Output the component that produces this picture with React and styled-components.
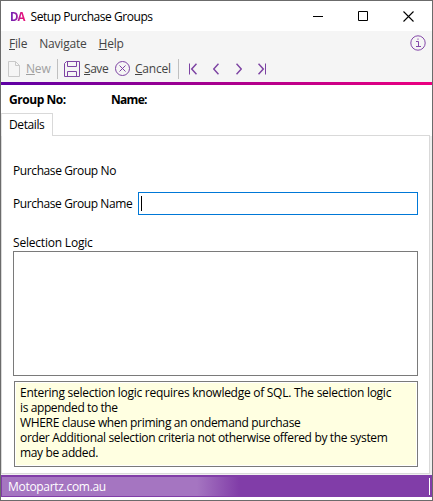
import React from 'react';
import styled, { createGlobalStyle } from 'styled-components';

const GlobalStyle = createGlobalStyle`
  * {
    box-sizing: border-box;
  }
  body {
    margin: 0;
    background: #fff;
    font-family: 'Open Sans', 'Noto Sans', sans-serif;
    font-size: 12px;
    line-height: 15px;
    color: #000;
  }
`;

const Window = styled.div`
  width: 433px;
  height: 501px;
  display: flex;
  flex-direction: column;
  border: 1px solid #6b6b6b;
  background: #fff;
  overflow: hidden;
`;

const Label = styled.span`
  white-space: pre;
  letter-spacing: ${(p) => p.$spacing || 0}px;
`;

const TitleBar = styled.header`
  height: 30px;
  flex: none;
  display: flex;
  align-items: center;
  padding: 0 18px 0 9px;
`;

const Logo = styled.span`
  width: 20.5px;
  font-size: 11.5px;
  font-weight: 700;
  letter-spacing: -0.9px;
  background: linear-gradient(90deg, #6a1bb0 0, #9a22a8 7px, #e5127d 12px);
  background-clip: text;
  color: transparent;
`;

const WindowButtons = styled.div`
  display: flex;
  gap: 34px;
  margin-left: auto;
`;

const MenuBar = styled.nav`
  height: 24px;
  flex: none;
  display: flex;
  align-items: center;
  gap: 12px;
  padding: 0 6px 0 8px;
  background: #f5f5f5;
  color: #444;
`;

const InfoIcon = styled.svg`
  margin-left: auto;
`;

const ToolBar = styled.div`
  height: 27px;
  flex: none;
  display: flex;
  align-items: center;
  padding-left: 7px;
  background: #f5f5f5;
  color: #444;
`;

const ToolButton = styled.div`
  width: ${(p) => p.$width}px;
  display: flex;
  align-items: center;
  gap: ${(p) => p.$gap}px;
  color: ${(p) => (p.$disabled ? '#a0a0a0' : '#444')};
`;

const Separator = styled.div`
  width: 1px;
  height: 20px;
  margin-right: ${(p) => p.$after}px;
  background: #c0c0c0;
`;

const Arrows = styled.div`
  width: 77px;
  display: flex;
  justify-content: space-between;
`;

const Stripe = styled.div`
  height: 3px;
  flex: none;
  background: linear-gradient(90deg, #5e00a4, #a8008f 50%, #ec0080);
`;

const Summary = styled.div`
  height: 28px;
  flex: none;
  display: grid;
  grid-template-columns: 102px auto;
  align-items: center;
  padding-left: 8px;
  font-weight: 700;
`;

const TabRow = styled.div`
  height: 23px;
  flex: none;
  display: flex;
`;

const Tab = styled.div`
  width: 52px;
  padding: 3px 0 0 7px;
  border: 1px solid #d9d9d9;
  border-bottom: 0;
  border-left-color: #e6e6e6;
`;

const TabRule = styled.div`
  flex: 1;
  border-bottom: 1px solid #d9d9d9;
  margin-right: 2px;
`;

const PanelFrame = styled.main`
  height: 339px;
  flex: none;
  padding: 0 2px 1px 0;
  background: #f0f0f0;
`;

const Panel = styled.section`
  height: 338px;
  display: flex;
  flex-direction: column;
  padding: 27px 11px 0 11px;
  border: 1px solid #d9d9d9;
  border-top: 0;
  background: #fff;
`;

const NameRow = styled.div`
  height: 23px;
  margin-top: 14px;
  display: flex;
  align-items: center;
  justify-content: space-between;
`;

const NameField = styled.div`
  width: 280px;
  height: 23px;
  padding: 3px 0 0 2px;
  border: 1px solid #0078d7;
`;

const Caret = styled.div`
  width: 1px;
  height: 15px;
  background: #000;
`;

const LogicLabel = styled.div`
  margin-top: 20px;
  height: 16px;
`;

const LogicField = styled.div`
  width: 405px;
  height: 125px;
  flex: none;
  border: 1px solid #7a7a7a;
`;

const Note = styled.div`
  width: 404px;
  height: 86px;
  margin: 5px 0 0 1px;
  flex: none;
  padding: 3px 0 0 5px;
  display: flex;
  flex-direction: column;
  border: 1px solid #7a7a7a;
  background: #ffffe1;
  box-shadow: inset 0 0 0 1px #fff;
`;

const StatusBar = styled.footer`
  height: 22px;
  flex: none;
  display: flex;
  align-items: center;
  justify-content: space-between;
  padding: 0 2px 0 6px;
  border: solid #813da8;
  border-width: 2px 0 1px 1px;
  background: linear-gradient(90deg, #a575c1 195px, #813da8 237px);
  color: #fff;
`;

const Grip = styled.div`
  width: 1px;
  height: 17px;
  background: #fff;
`;

const noteLines = [
  ['Entering selection logic requires knowledge of SQL. The selection logic', -0.27],
  ['is appended to the', -0.4],
  ['WHERE clause when priming an ondemand purchase', -0.33],
  ['order Additional selection criteria not otherwise offered by the system', -0.34],
  ['may be added.', -0.36],
];

const Arrow = ({ flip, bar }) => (
  <svg
    width={bar ? 8 : 6}
    height="12"
    viewBox={bar ? '0 0 8 12' : '0 0 6 12'}
    fill="none"
    stroke="#7d43a3"
  >
    <g transform={flip ? `matrix(-1 0 0 1 ${bar ? 8 : 6} 0)` : undefined}>
      <path d="M.5.7 5.3 6 .5 11.3" strokeWidth="1.5" />
      {bar && <path d="M7.5.5v11" />}
    </g>
  </svg>
);

const App = () => (
  <>
    <GlobalStyle />
    <Window>
      <TitleBar>
        <Logo>DA</Logo>
        <Label $spacing={-0.45}>Setup Purchase Groups</Label>
        <WindowButtons>
          <svg width="11" height="11" stroke="#000">
            <path d="M0 5.5h10" />
          </svg>
          <svg width="11" height="11" fill="none" stroke="#000">
            <path d="M.5.5h9v9h-9z" />
          </svg>
          <svg width="11" height="11" fill="none" stroke="#000" strokeWidth="1.1">
            <path d="m.5.5 10 10m0-10-10 10" />
          </svg>
        </WindowButtons>
      </TitleBar>
      <MenuBar>
        <Label $spacing={-0.2}><u>F</u>ile</Label>
        <Label $spacing={-0.2}>Navigate</Label>
        <Label $spacing={-0.2}><u>H</u>elp</Label>
        <InfoIcon width="16" height="16" fill="none" stroke="#8549a9">
          <circle cx="8" cy="8" r="7.2" />
          <path d="M6 6.5h2.5v5M6 11.5h5M8 3.5v1.3" />
        </InfoIcon>
      </MenuBar>
      <ToolBar>
        <ToolButton $width={49} $gap={6} $disabled>
          <svg width="12" height="16" fill="none" stroke="#c9c9c9">
            <path d="M.5.5h7l4 4v11H.5zM7.5.5v4h4" />
          </svg>
          <Label $spacing={-0.2}><u>N</u>ew</Label>
        </ToolButton>
        <Separator $after={6} />
        <ToolButton $width={51} $gap={4}>
          <svg width="16" height="16" fill="none" stroke="#7d43a3">
            <path d="M2.5.5h13v15H.5v-13zM3.5.5v5h9v-5M3.5 15.5v-5h9v5" />
          </svg>
          <Label $spacing={-0.45}><u>S</u>ave</Label>
        </ToolButton>
        <ToolButton $width={63} $gap={5}>
          <svg width="15" height="15" fill="none" stroke="#7d43a3">
            <circle cx="7.5" cy="7.5" r="7" />
            <path d="m4.5 4.5 6 6m0-6-6 6" />
          </svg>
          <Label $spacing={-0.2}><u>C</u>ancel</Label>
        </ToolButton>
        <Separator $after={10} />
        <Arrows>
          <Arrow flip bar />
          <Arrow flip />
          <Arrow />
          <Arrow bar />
        </Arrows>
      </ToolBar>
      <Stripe />
      <Summary>
        <Label $spacing={-0.45}>Group No:</Label>
        <Label $spacing={-0.7}>Name:</Label>
      </Summary>
      <TabRow>
        <Tab><Label $spacing={-0.4}>Details</Label></Tab>
        <TabRule />
      </TabRow>
      <PanelFrame>
        <Panel>
          <Label $spacing={-0.4}>Purchase Group No</Label>
          <NameRow>
            <Label $spacing={-0.41}>Purchase Group Name</Label>
            <NameField><Caret /></NameField>
          </NameRow>
          <LogicLabel><Label $spacing={-0.2}>Selection Logic</Label></LogicLabel>
          <LogicField />
          <Note>
            {noteLines.map(([text, spacing]) => (
              <Label key={text} $spacing={spacing}>{text}</Label>
            ))}
          </Note>
        </Panel>
      </PanelFrame>
      <StatusBar>
        <Label $spacing={-0.3}>Motopartz.com.au</Label>
        <Grip />
      </StatusBar>
    </Window>
  </>
);

export default App;
